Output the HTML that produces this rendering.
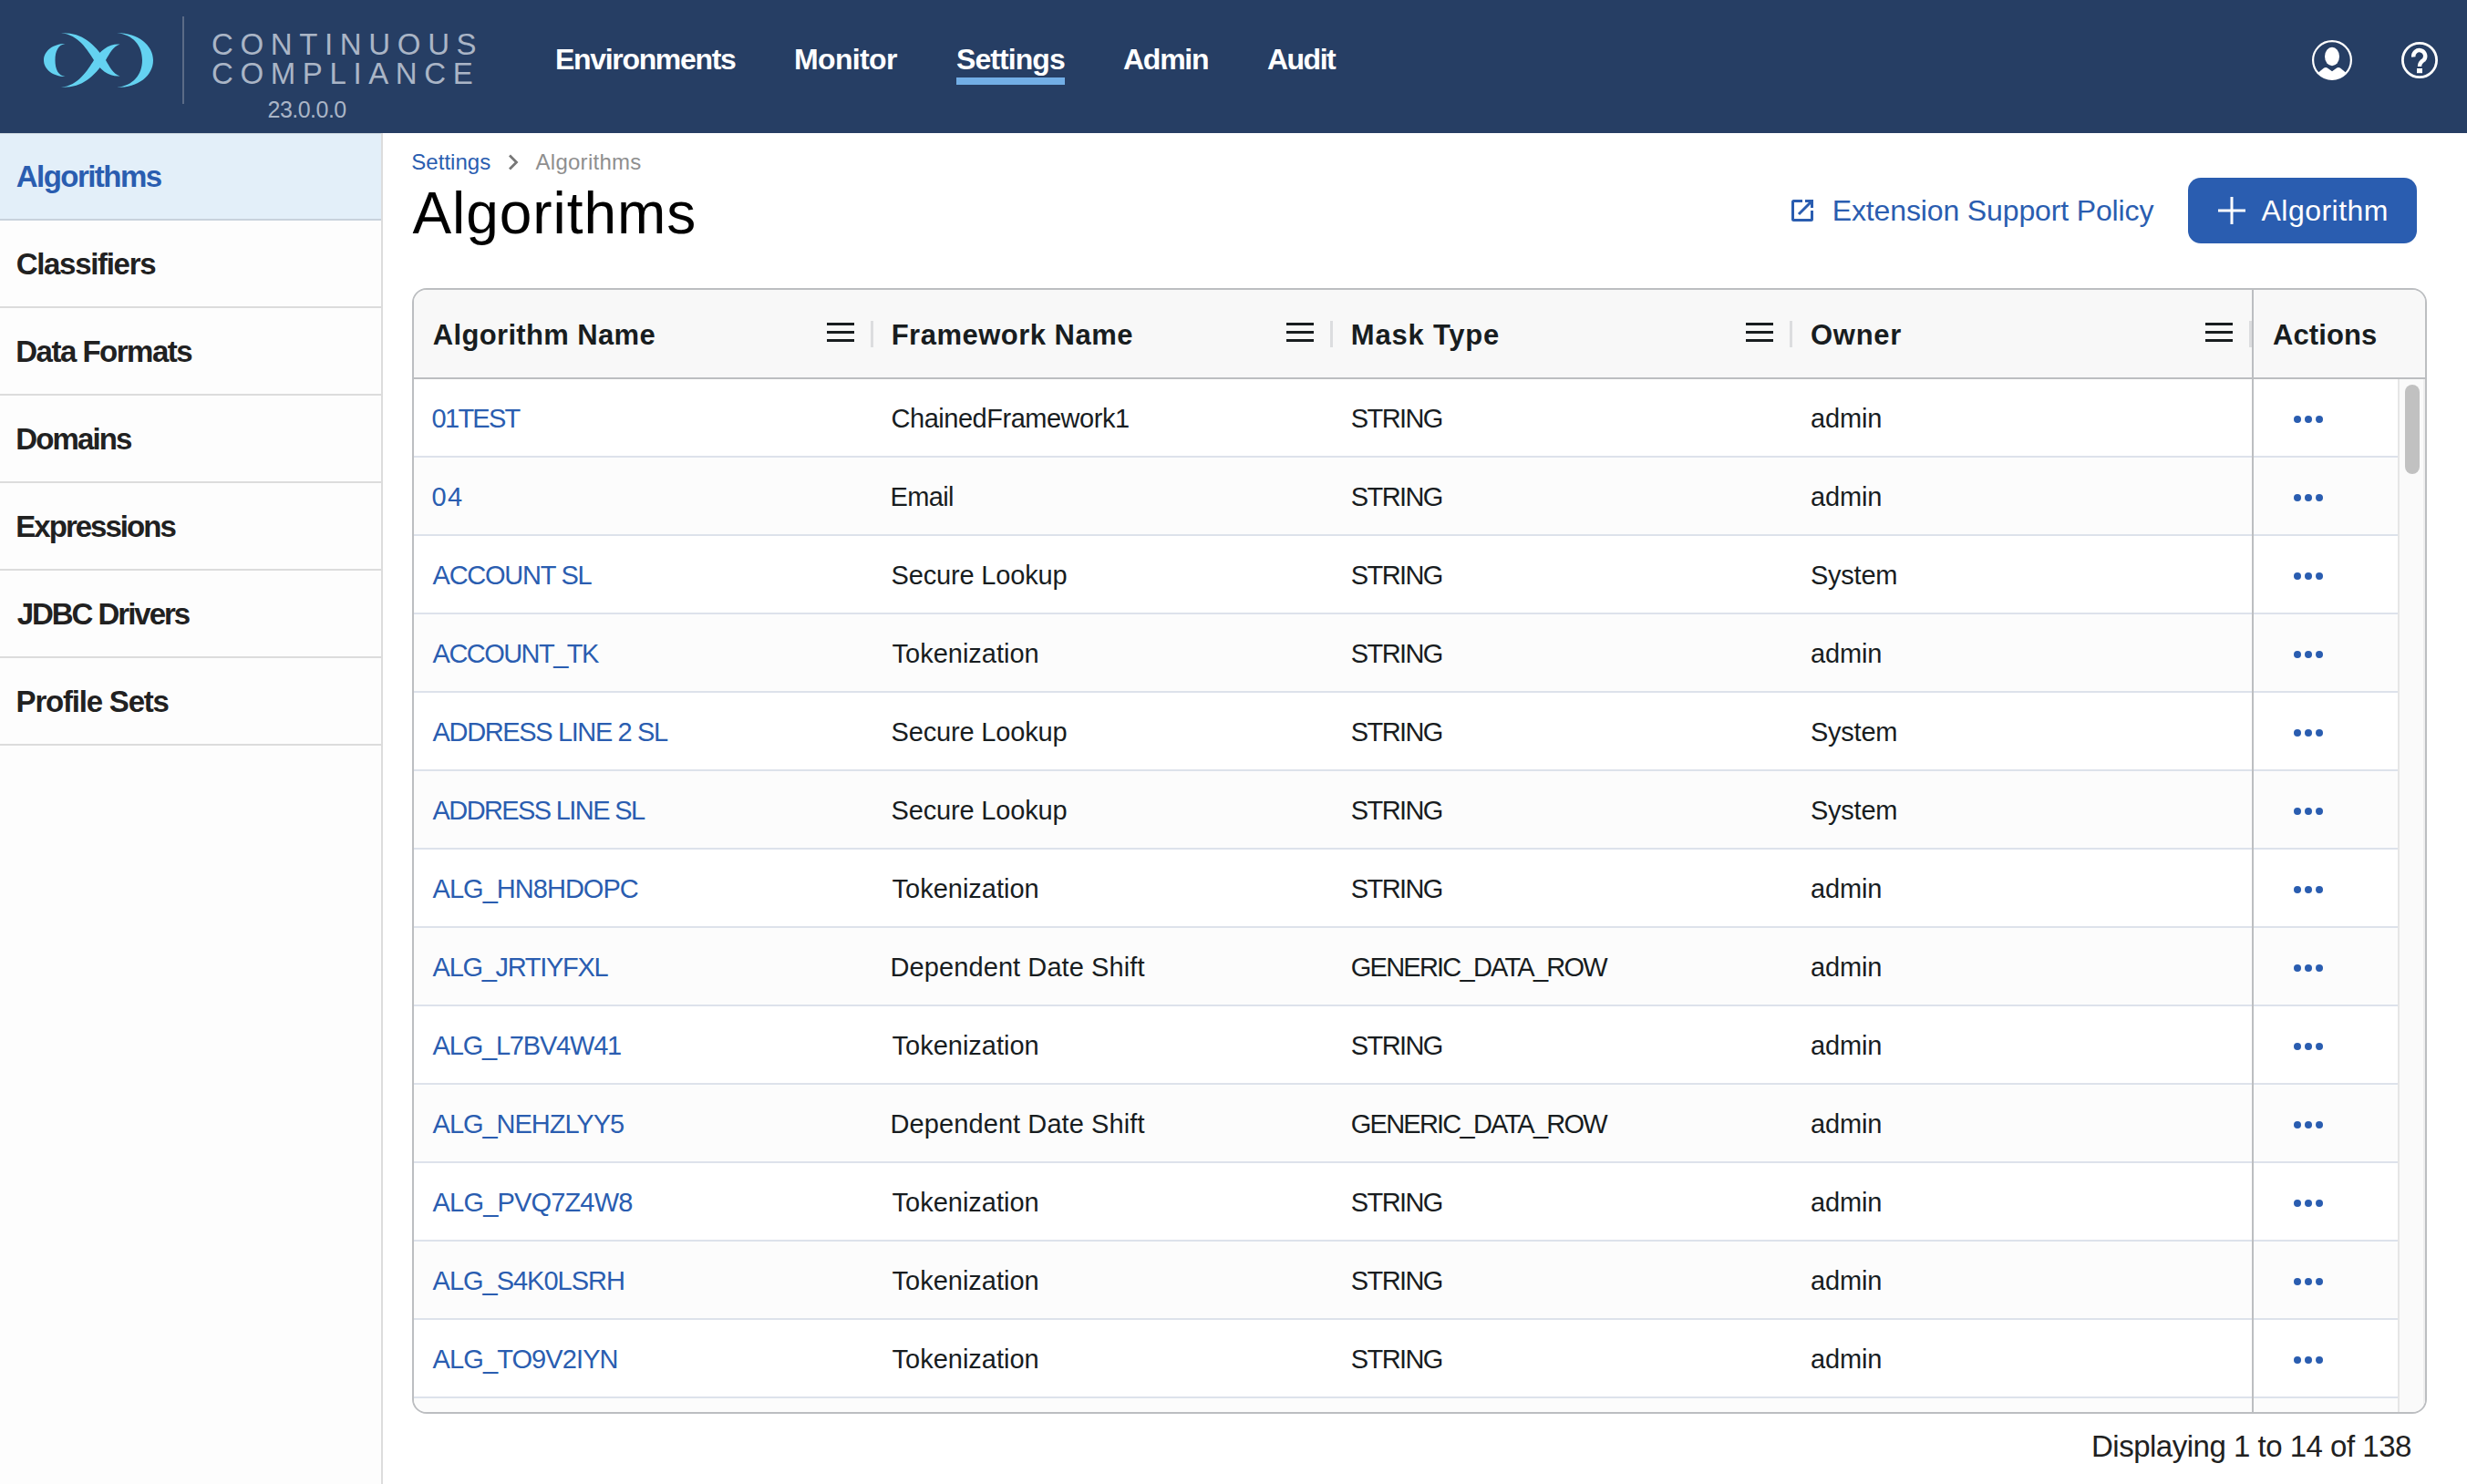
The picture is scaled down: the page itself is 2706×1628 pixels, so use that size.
<!DOCTYPE html>
<html><head><meta charset="utf-8">
<style>
*{box-sizing:border-box;margin:0;padding:0}
html,body{width:2706px;height:1628px;overflow:hidden;background:#fff;font-family:"Liberation Sans",sans-serif}
.a{position:absolute;white-space:nowrap;line-height:1}
@media (max-width:1500px){html{zoom:0.5}}
.mi{width:30px;height:21px;border-top:3px solid #181d1f;border-bottom:3px solid #181d1f}
.mi:after{content:"";position:absolute;left:0;top:6px;width:30px;height:3px;background:#181d1f}
.dots i{position:absolute;top:0;width:8px;height:8px;border-radius:50%;background:#2a5db0}
.dots i:nth-child(1){left:0}.dots i:nth-child(2){left:12px}.dots i:nth-child(3){left:24px}
</style></head><body>
<div class="a" style="left:0;top:0;width:2706px;height:146px;background:#263e64"></div>
<svg class="a" style="left:0;top:0" width="220" height="146" viewBox="0 0 220 146">
  <g fill="#64d2f1">
    <path d="M71.5 48C58 48 48 56 48 66C48 76 58 84 71.5 84C64 83 60.5 76 60.5 66C60.5 56 64 49 71.5 48Z"/>
    <path d="M67 36.3C90 35.5 102 47 116 66C102 85 90 96.5 67 95.7C86 94 96 77 103 66C96 55 86 38 67 36.3Z"/>
    <path d="M131.5 48.5C120 47.5 110 55 103 66C110 77 120 84.5 131.5 83.5C124 81 120 73 116 66C120 59 124 51 131.5 48.5Z"/>
    <path d="M128 36C152 36 168 50 168 66C168 83 152 96 128 96C146 94 156 82 156 66C156 50 146 38 128 36Z"/>
  </g>
  <rect x="200" y="18" width="2" height="96" fill="#5b6b86"/>
</svg>
<div class="a" style="left:1049px;top:85px;width:119px;height:8px;background:#72aee6"></div>
<svg class="a" style="left:2530px;top:38px" width="56" height="56" viewBox="2530 38 56 56">
  <defs><clipPath id="uc"><circle cx="2558" cy="66" r="21"/></clipPath></defs>
  <circle cx="2558" cy="66" r="20.9" fill="none" stroke="#fff" stroke-width="2.2"/>
  <ellipse cx="2558" cy="62" rx="8" ry="10.2" fill="#fff"/>
  <path clip-path="url(#uc)" d="M2540 82L2548.5 75Q2551 73 2553.5 75L2558 78.3L2562.5 75Q2565 73 2567.5 75L2576 82L2578 95L2538 95Z" fill="#fff"/>
</svg>
<svg class="a" style="left:2630px;top:42px" width="48" height="48" viewBox="2630 42 48 48">
  <circle cx="2654" cy="66" r="18.6" fill="none" stroke="#fff" stroke-width="2.8"/>
  <path d="M2647.3 62.5A6.5 6.5 0 1 1 2658.8 65.7Q2654 68.5 2654 73" fill="none" stroke="#fff" stroke-width="4.4"/>
  <rect x="2651" y="75" width="6" height="5.2" fill="#fff"/>
</svg>
<!-- sidebar -->
<div class="a" style="left:0;top:146px;width:418px;height:1482px;background:#fdfdfd"></div>
<div class="a" style="left:418px;top:146px;width:2px;height:1482px;background:#dcdcdc"></div>
<div class="a" style="left:0;top:146px;width:418px;height:94px;background:#e3eff9"></div>
<div class="a" style="left:0;top:240px;width:418px;height:2px;background:#c8d2dc"></div>
<div class="a" style="left:0;top:146px;width:418px;height:1px;background:#cfd8e0"></div>
<div class="a" style="left:0;top:336px;width:418px;height:2px;background:#dcdcdc"></div><div class="a" style="left:0;top:432px;width:418px;height:2px;background:#dcdcdc"></div><div class="a" style="left:0;top:528px;width:418px;height:2px;background:#dcdcdc"></div><div class="a" style="left:0;top:624px;width:418px;height:2px;background:#dcdcdc"></div><div class="a" style="left:0;top:720px;width:418px;height:2px;background:#dcdcdc"></div><div class="a" style="left:0;top:816px;width:418px;height:2px;background:#dcdcdc"></div>
<!-- content -->
<svg class="a" style="left:556px;top:168px" width="16" height="20" viewBox="0 0 16 20"><path d="M3 2.5L10.5 10L3 17.5" fill="none" stroke="#777" stroke-width="2.8"/></svg>
<svg class="a" style="left:1963px;top:217px" width="28" height="28" viewBox="0 0 28 28">
  <path d="M14 3.5H4.5Q3.5 3.5 3.5 4.5V23.5Q3.5 24.5 4.5 24.5H23.5Q24.5 24.5 24.5 23.5V14" fill="none" stroke="#2a5db0" stroke-width="3"/>
  <path d="M17 3.5H24.5V11M24.5 3.5L10 18" fill="none" stroke="#2a5db0" stroke-width="3"/>
</svg>
<div class="a" style="left:2400px;top:195px;width:251px;height:72px;background:#2a5db0;border-radius:14px"></div>
<svg class="a" style="left:2432px;top:215px" width="32" height="32" viewBox="0 0 32 32"><path d="M16 1V31M1 16H31" stroke="#fff" stroke-width="3"/></svg>
<!-- table -->
<div class="a" style="left:452px;top:316px;width:2210px;height:1235px;border:2px solid #bcbec1;border-radius:16px;overflow:hidden;background:#fff">
<div class="a" style="left:0;top:0;width:2206px;height:96px;background:#f8f8f8"></div>
<div class="a" style="left:0;top:96px;width:2206px;height:2px;background:#bcbec1"></div>
<div class="a" style="left:0;top:98px;width:2176px;height:84px;background:#fff"></div><div class="a" style="left:0;top:182px;width:2176px;height:2px;background:#dde2eb"></div><div class="a dots" style="left:2062px;top:138px"><i></i><i></i><i></i></div><div class="a" style="left:0;top:184px;width:2176px;height:84px;background:#fcfcfc"></div><div class="a" style="left:0;top:268px;width:2176px;height:2px;background:#dde2eb"></div><div class="a dots" style="left:2062px;top:224px"><i></i><i></i><i></i></div><div class="a" style="left:0;top:270px;width:2176px;height:84px;background:#fff"></div><div class="a" style="left:0;top:354px;width:2176px;height:2px;background:#dde2eb"></div><div class="a dots" style="left:2062px;top:310px"><i></i><i></i><i></i></div><div class="a" style="left:0;top:356px;width:2176px;height:84px;background:#fcfcfc"></div><div class="a" style="left:0;top:440px;width:2176px;height:2px;background:#dde2eb"></div><div class="a dots" style="left:2062px;top:396px"><i></i><i></i><i></i></div><div class="a" style="left:0;top:442px;width:2176px;height:84px;background:#fff"></div><div class="a" style="left:0;top:526px;width:2176px;height:2px;background:#dde2eb"></div><div class="a dots" style="left:2062px;top:482px"><i></i><i></i><i></i></div><div class="a" style="left:0;top:528px;width:2176px;height:84px;background:#fcfcfc"></div><div class="a" style="left:0;top:612px;width:2176px;height:2px;background:#dde2eb"></div><div class="a dots" style="left:2062px;top:568px"><i></i><i></i><i></i></div><div class="a" style="left:0;top:614px;width:2176px;height:84px;background:#fff"></div><div class="a" style="left:0;top:698px;width:2176px;height:2px;background:#dde2eb"></div><div class="a dots" style="left:2062px;top:654px"><i></i><i></i><i></i></div><div class="a" style="left:0;top:700px;width:2176px;height:84px;background:#fcfcfc"></div><div class="a" style="left:0;top:784px;width:2176px;height:2px;background:#dde2eb"></div><div class="a dots" style="left:2062px;top:740px"><i></i><i></i><i></i></div><div class="a" style="left:0;top:786px;width:2176px;height:84px;background:#fff"></div><div class="a" style="left:0;top:870px;width:2176px;height:2px;background:#dde2eb"></div><div class="a dots" style="left:2062px;top:826px"><i></i><i></i><i></i></div><div class="a" style="left:0;top:872px;width:2176px;height:84px;background:#fcfcfc"></div><div class="a" style="left:0;top:956px;width:2176px;height:2px;background:#dde2eb"></div><div class="a dots" style="left:2062px;top:912px"><i></i><i></i><i></i></div><div class="a" style="left:0;top:958px;width:2176px;height:84px;background:#fff"></div><div class="a" style="left:0;top:1042px;width:2176px;height:2px;background:#dde2eb"></div><div class="a dots" style="left:2062px;top:998px"><i></i><i></i><i></i></div><div class="a" style="left:0;top:1044px;width:2176px;height:84px;background:#fcfcfc"></div><div class="a" style="left:0;top:1128px;width:2176px;height:2px;background:#dde2eb"></div><div class="a dots" style="left:2062px;top:1084px"><i></i><i></i><i></i></div><div class="a" style="left:0;top:1130px;width:2176px;height:84px;background:#fff"></div><div class="a" style="left:0;top:1214px;width:2176px;height:2px;background:#dde2eb"></div><div class="a dots" style="left:2062px;top:1170px"><i></i><i></i><i></i></div><div class="a" style="left:0;top:1216px;width:2176px;height:84px;background:#fcfcfc"></div><div class="a" style="left:0;top:1300px;width:2176px;height:2px;background:#dde2eb"></div>
<div class="a" style="left:2176px;top:98px;width:30px;height:1133px;background:#fafafa;border-left:2px solid #e6e6e6;border-right:2px solid #efefef"></div>
<div class="a" style="left:2184px;top:104px;width:16px;height:98px;background:#c1c1c1;border-radius:8px"></div>
<div class="a" style="left:2016px;top:0;width:2px;height:1231px;background:#bcbec1"></div>
<div class="a mi" style="left:453px;top:36px"></div><div class="a" style="left:501px;top:34px;width:3px;height:29px;background:#dcdddf"></div><div class="a mi" style="left:957px;top:36px"></div><div class="a" style="left:1005px;top:34px;width:3px;height:29px;background:#dcdddf"></div><div class="a mi" style="left:1461px;top:36px"></div><div class="a" style="left:1509px;top:34px;width:3px;height:29px;background:#dcdddf"></div><div class="a mi" style="left:1965px;top:36px"></div><div class="a" style="left:2013px;top:34px;width:3px;height:29px;background:#dcdddf"></div>
</div>
<div class="a" style="left:232.00px;top:32px;font-size:33px;color:#aab5c6;letter-spacing:7.642px">CONTINUOUS</div>
<div class="a" style="left:232.00px;top:64px;font-size:33px;color:#aab5c6;letter-spacing:7.612px">COMPLIANCE</div>
<div class="a" style="left:293.60px;top:108px;font-size:25px;color:#aab5c6;letter-spacing:-0.536px">23.0.0.0</div>
<div class="a" style="left:609.00px;top:49px;font-size:32px;color:#fff;font-weight:700;letter-spacing:-1.325px">Environments</div>
<div class="a" style="left:871.00px;top:49px;font-size:32px;color:#fff;font-weight:700;letter-spacing:-0.641px">Monitor</div>
<div class="a" style="left:1049.00px;top:49px;font-size:32px;color:#fff;font-weight:700;letter-spacing:-0.920px">Settings</div>
<div class="a" style="left:1232.00px;top:49px;font-size:32px;color:#fff;font-weight:700;letter-spacing:-1.250px">Admin</div>
<div class="a" style="left:1390.00px;top:49px;font-size:32px;color:#fff;font-weight:700;letter-spacing:-1.523px">Audit</div>
<div class="a" style="left:17.80px;top:177px;font-size:33px;color:#2a5db0;font-weight:700;letter-spacing:-1.546px">Algorithms</div>
<div class="a" style="left:17.70px;top:273px;font-size:33px;color:#212121;font-weight:700;letter-spacing:-1.308px">Classifiers</div>
<div class="a" style="left:17.30px;top:369px;font-size:33px;color:#212121;font-weight:700;letter-spacing:-1.513px">Data Formats</div>
<div class="a" style="left:17.30px;top:465px;font-size:33px;color:#212121;font-weight:700;letter-spacing:-1.885px">Domains</div>
<div class="a" style="left:17.30px;top:561px;font-size:33px;color:#212121;font-weight:700;letter-spacing:-1.981px">Expressions</div>
<div class="a" style="left:18.70px;top:657px;font-size:33px;color:#212121;font-weight:700;letter-spacing:-2.028px">JDBC Drivers</div>
<div class="a" style="left:17.60px;top:753px;font-size:33px;color:#212121;font-weight:700;letter-spacing:-1.201px">Profile Sets</div>
<div class="a" style="left:451.30px;top:166px;font-size:24px;color:#2a5db0;letter-spacing:0.026px">Settings</div>
<div class="a" style="left:587.50px;top:166px;font-size:24px;color:#8f8f8f;letter-spacing:0.270px">Algorithms</div>
<div class="a" style="left:452.50px;top:202px;font-size:64px;color:#000;letter-spacing:0.932px">Algorithms</div>
<div class="a" style="left:2009.80px;top:215px;font-size:32px;color:#2a5db0;letter-spacing:-0.137px">Extension Support Policy</div>
<div class="a" style="left:2480.50px;top:215px;font-size:32px;color:#fff;letter-spacing:0.475px">Algorithm</div>
<div class="a" style="left:2294.00px;top:1570px;font-size:33px;color:#212121;letter-spacing:-0.495px">Displaying 1 to 14 of 138</div>
<div class="a" style="left:474.70px;top:352px;font-size:31px;color:#181d1f;font-weight:700;letter-spacing:0.356px">Algorithm Name</div>
<div class="a" style="left:977.70px;top:352px;font-size:31px;color:#181d1f;font-weight:700;letter-spacing:0.484px">Framework Name</div>
<div class="a" style="left:1481.80px;top:352px;font-size:31px;color:#181d1f;font-weight:700;letter-spacing:0.791px">Mask Type</div>
<div class="a" style="left:1986.00px;top:352px;font-size:31px;color:#181d1f;font-weight:700;letter-spacing:0.724px">Owner</div>
<div class="a" style="left:2493.00px;top:352px;font-size:31px;color:#181d1f;font-weight:700;letter-spacing:0.094px">Actions</div>
<div class="a" style="left:473.60px;top:445px;font-size:29px;color:#2a5db0;letter-spacing:-1.731px">01TEST</div>
<div class="a" style="left:977.60px;top:445px;font-size:29px;color:#181d1f;letter-spacing:-0.484px">ChainedFramework1</div>
<div class="a" style="left:1481.80px;top:445px;font-size:29px;color:#181d1f;letter-spacing:-1.600px">STRING</div>
<div class="a" style="left:1986.00px;top:445px;font-size:29px;color:#181d1f;letter-spacing:-0.139px">admin</div>
<div class="a" style="left:473.60px;top:531px;font-size:29px;color:#2a5db0;letter-spacing:1.372px">04</div>
<div class="a" style="left:976.60px;top:531px;font-size:29px;color:#181d1f;letter-spacing:-0.643px">Email</div>
<div class="a" style="left:1481.80px;top:531px;font-size:29px;color:#181d1f;letter-spacing:-1.600px">STRING</div>
<div class="a" style="left:1986.00px;top:531px;font-size:29px;color:#181d1f;letter-spacing:-0.139px">admin</div>
<div class="a" style="left:474.60px;top:617px;font-size:29px;color:#2a5db0;letter-spacing:-1.265px">ACCOUNT SL</div>
<div class="a" style="left:977.60px;top:617px;font-size:29px;color:#181d1f;letter-spacing:-0.171px">Secure Lookup</div>
<div class="a" style="left:1481.80px;top:617px;font-size:29px;color:#181d1f;letter-spacing:-1.600px">STRING</div>
<div class="a" style="left:1986.00px;top:617px;font-size:29px;color:#181d1f;letter-spacing:-0.246px">System</div>
<div class="a" style="left:474.60px;top:703px;font-size:29px;color:#2a5db0;letter-spacing:-1.548px">ACCOUNT_TK</div>
<div class="a" style="left:978.60px;top:703px;font-size:29px;color:#181d1f;letter-spacing:-0.017px">Tokenization</div>
<div class="a" style="left:1481.80px;top:703px;font-size:29px;color:#181d1f;letter-spacing:-1.600px">STRING</div>
<div class="a" style="left:1986.00px;top:703px;font-size:29px;color:#181d1f;letter-spacing:-0.139px">admin</div>
<div class="a" style="left:474.60px;top:789px;font-size:29px;color:#2a5db0;letter-spacing:-1.370px">ADDRESS LINE 2 SL</div>
<div class="a" style="left:977.60px;top:789px;font-size:29px;color:#181d1f;letter-spacing:-0.171px">Secure Lookup</div>
<div class="a" style="left:1481.80px;top:789px;font-size:29px;color:#181d1f;letter-spacing:-1.600px">STRING</div>
<div class="a" style="left:1986.00px;top:789px;font-size:29px;color:#181d1f;letter-spacing:-0.246px">System</div>
<div class="a" style="left:474.60px;top:875px;font-size:29px;color:#2a5db0;letter-spacing:-1.623px">ADDRESS LINE SL</div>
<div class="a" style="left:977.60px;top:875px;font-size:29px;color:#181d1f;letter-spacing:-0.171px">Secure Lookup</div>
<div class="a" style="left:1481.80px;top:875px;font-size:29px;color:#181d1f;letter-spacing:-1.600px">STRING</div>
<div class="a" style="left:1986.00px;top:875px;font-size:29px;color:#181d1f;letter-spacing:-0.246px">System</div>
<div class="a" style="left:474.60px;top:961px;font-size:29px;color:#2a5db0;letter-spacing:-0.978px">ALG_HN8HDOPC</div>
<div class="a" style="left:978.60px;top:961px;font-size:29px;color:#181d1f;letter-spacing:-0.017px">Tokenization</div>
<div class="a" style="left:1481.80px;top:961px;font-size:29px;color:#181d1f;letter-spacing:-1.600px">STRING</div>
<div class="a" style="left:1986.00px;top:961px;font-size:29px;color:#181d1f;letter-spacing:-0.139px">admin</div>
<div class="a" style="left:474.60px;top:1047px;font-size:29px;color:#2a5db0;letter-spacing:-1.304px">ALG_JRTIYFXL</div>
<div class="a" style="left:976.60px;top:1047px;font-size:29px;color:#181d1f;letter-spacing:0.082px">Dependent Date Shift</div>
<div class="a" style="left:1481.80px;top:1047px;font-size:29px;color:#181d1f;letter-spacing:-1.768px">GENERIC_DATA_ROW</div>
<div class="a" style="left:1986.00px;top:1047px;font-size:29px;color:#181d1f;letter-spacing:-0.139px">admin</div>
<div class="a" style="left:474.60px;top:1133px;font-size:29px;color:#2a5db0;letter-spacing:-1.203px">ALG_L7BV4W41</div>
<div class="a" style="left:978.60px;top:1133px;font-size:29px;color:#181d1f;letter-spacing:-0.017px">Tokenization</div>
<div class="a" style="left:1481.80px;top:1133px;font-size:29px;color:#181d1f;letter-spacing:-1.600px">STRING</div>
<div class="a" style="left:1986.00px;top:1133px;font-size:29px;color:#181d1f;letter-spacing:-0.139px">admin</div>
<div class="a" style="left:474.60px;top:1219px;font-size:29px;color:#2a5db0;letter-spacing:-1.033px">ALG_NEHZLYY5</div>
<div class="a" style="left:976.60px;top:1219px;font-size:29px;color:#181d1f;letter-spacing:0.082px">Dependent Date Shift</div>
<div class="a" style="left:1481.80px;top:1219px;font-size:29px;color:#181d1f;letter-spacing:-1.768px">GENERIC_DATA_ROW</div>
<div class="a" style="left:1986.00px;top:1219px;font-size:29px;color:#181d1f;letter-spacing:-0.139px">admin</div>
<div class="a" style="left:474.60px;top:1305px;font-size:29px;color:#2a5db0;letter-spacing:-0.831px">ALG_PVQ7Z4W8</div>
<div class="a" style="left:978.60px;top:1305px;font-size:29px;color:#181d1f;letter-spacing:-0.017px">Tokenization</div>
<div class="a" style="left:1481.80px;top:1305px;font-size:29px;color:#181d1f;letter-spacing:-1.600px">STRING</div>
<div class="a" style="left:1986.00px;top:1305px;font-size:29px;color:#181d1f;letter-spacing:-0.139px">admin</div>
<div class="a" style="left:474.60px;top:1391px;font-size:29px;color:#2a5db0;letter-spacing:-1.019px">ALG_S4K0LSRH</div>
<div class="a" style="left:978.60px;top:1391px;font-size:29px;color:#181d1f;letter-spacing:-0.017px">Tokenization</div>
<div class="a" style="left:1481.80px;top:1391px;font-size:29px;color:#181d1f;letter-spacing:-1.600px">STRING</div>
<div class="a" style="left:1986.00px;top:1391px;font-size:29px;color:#181d1f;letter-spacing:-0.139px">admin</div>
<div class="a" style="left:474.60px;top:1477px;font-size:29px;color:#2a5db0;letter-spacing:-0.900px">ALG_TO9V2IYN</div>
<div class="a" style="left:978.60px;top:1477px;font-size:29px;color:#181d1f;letter-spacing:-0.017px">Tokenization</div>
<div class="a" style="left:1481.80px;top:1477px;font-size:29px;color:#181d1f;letter-spacing:-1.600px">STRING</div>
<div class="a" style="left:1986.00px;top:1477px;font-size:29px;color:#181d1f;letter-spacing:-0.139px">admin</div>
</body></html>
